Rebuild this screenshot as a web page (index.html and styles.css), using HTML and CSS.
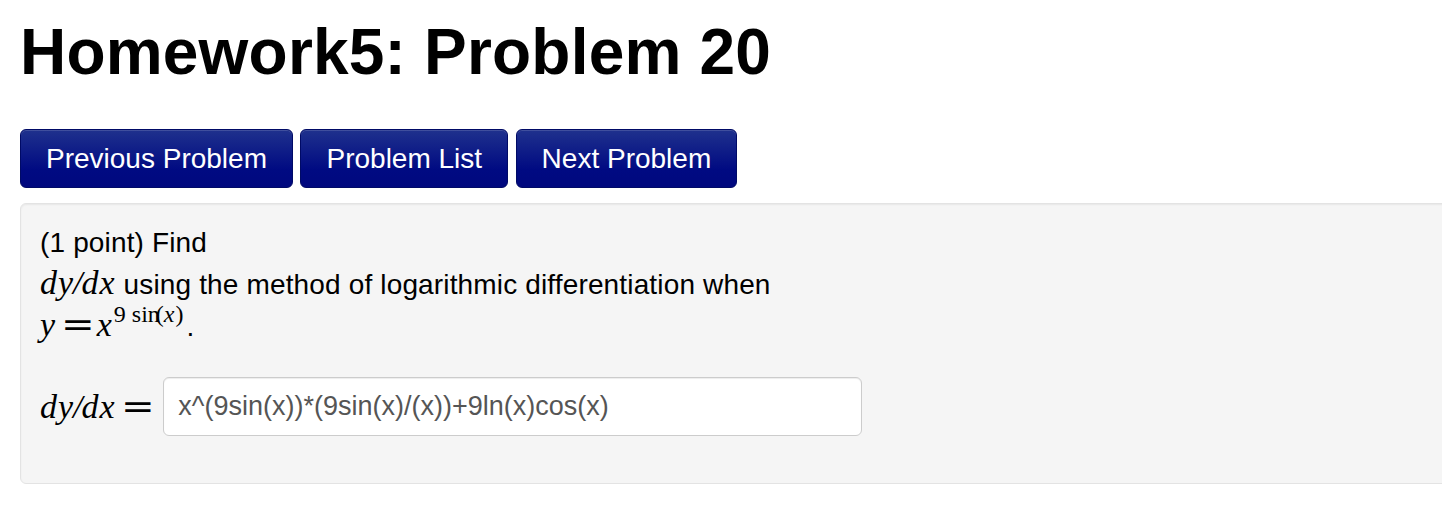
FILE: index.html
```html
<!DOCTYPE html>
<html lang="en">
<head>
    <meta charset="UTF-8">
    <title>Homework5: Problem 20</title>
    <link rel="stylesheet" href="styles.css">
</head>
<body>
    <div class="page">
        <h1>Homework5: Problem 20</h1>

        <div class="problem-nav">
            <a class="nav-btn" href="#">Previous Problem</a>
            <a class="nav-btn" href="#">Problem List</a>
            <a class="nav-btn" href="#">Next Problem</a>
        </div>

        <div class="problem-box">
            <div class="problem-text">
                (1 point) Find<br>
                <span class="math"><i>dy</i><span class="slash">/</span><i>dx</i></span> using the method of logarithmic differentiation when<br>
                <span class="math"><i>y</i><span class="op">=</span><i>x</i><sup class="exp">9 sin<span class="paren">(<i>x</i>)</span></sup></span>.
            </div>

            <div class="answer-row">
                <span class="math answer-label"><i>dy</i><span class="slash">/</span><i>dx</i><span class="op">=</span></span>
                <input class="answer-input" type="text" value="x^(9sin(x))*(9sin(x)/(x))+9ln(x)cos(x)">
            </div>
        </div>
    </div>
</body>
</html>
```

FILE: styles.css
```css
body {
    margin: 0;
    font-family: "Liberation Sans", Arial, Helvetica, sans-serif;
    color: #000;
    background: #ffffff;
    overflow-x: hidden;
}

.page {
    padding: 0 20px;
}

h1 {
    margin: 15px 0 0;
    font-size: 64px;
    line-height: 74px;
    font-weight: bold;
    letter-spacing: 0.2px;
}

/* nav buttons */
.problem-nav {
    display: flex;
    gap: 7.5px;
    margin-top: 40px;
}

.nav-btn {
    display: flex;
    align-items: center;
    height: 59px;
    box-sizing: border-box;
    padding: 0 25px;
    font-size: 28px;
    color: #ffffff;
    text-decoration: none;
    background: linear-gradient(#1f318d, #000a82 70%, #00087e);
    border: 1px solid #000a66;
    border-radius: 6px;
    box-shadow: inset 0 1px 0 rgba(255,255,255,0.15);
}

/* problem well */
.problem-box {
    margin-top: 15px;
    margin-right: -40px;
    padding: 19px 19px 47px;
    background: #f5f5f5;
    border: 1px solid #e3e3e3;
    border-radius: 6px;
    box-shadow: inset 0 1px 2px rgba(0,0,0,0.06);
}

.problem-text {
    font-size: 28px;
    line-height: 40px;
    letter-spacing: 0.15px;
}

.math {
    font-family: "Liberation Serif", "Times New Roman", serif;
    font-size: 34px;
    letter-spacing: 0;
}

.math i {
    letter-spacing: 1px;
}

.slash {
    font-style: italic;
    margin: 0 -1px;
}

.op {
    display: inline-block;
    font-family: "DejaVu Serif", serif;
    font-size: 33px;
    transform: scaleX(1.22);
    margin: 0 5px 0 8px;
}

.exp {
    font-size: 24px;
    vertical-align: 0;
    position: relative;
    top: -14px;
    margin-left: 1px;
    margin-right: 3px;
}

.paren {
    margin-left: -4px;
}

.answer-row {
    display: flex;
    align-items: center;
    margin-top: 29px;
}

.answer-label {
    margin-right: 7px;
}

.answer-input {
    width: 699px;
    height: 59px;
    box-sizing: border-box;
    padding: 0 14px;
    font-family: "Liberation Sans", Arial, sans-serif;
    font-size: 27px;
    color: #555555;
    background: #ffffff;
    border: 1px solid #cccccc;
    border-radius: 6px;
    box-shadow: inset 0 1px 1px rgba(0,0,0,0.075);
    outline: none;
}
```
